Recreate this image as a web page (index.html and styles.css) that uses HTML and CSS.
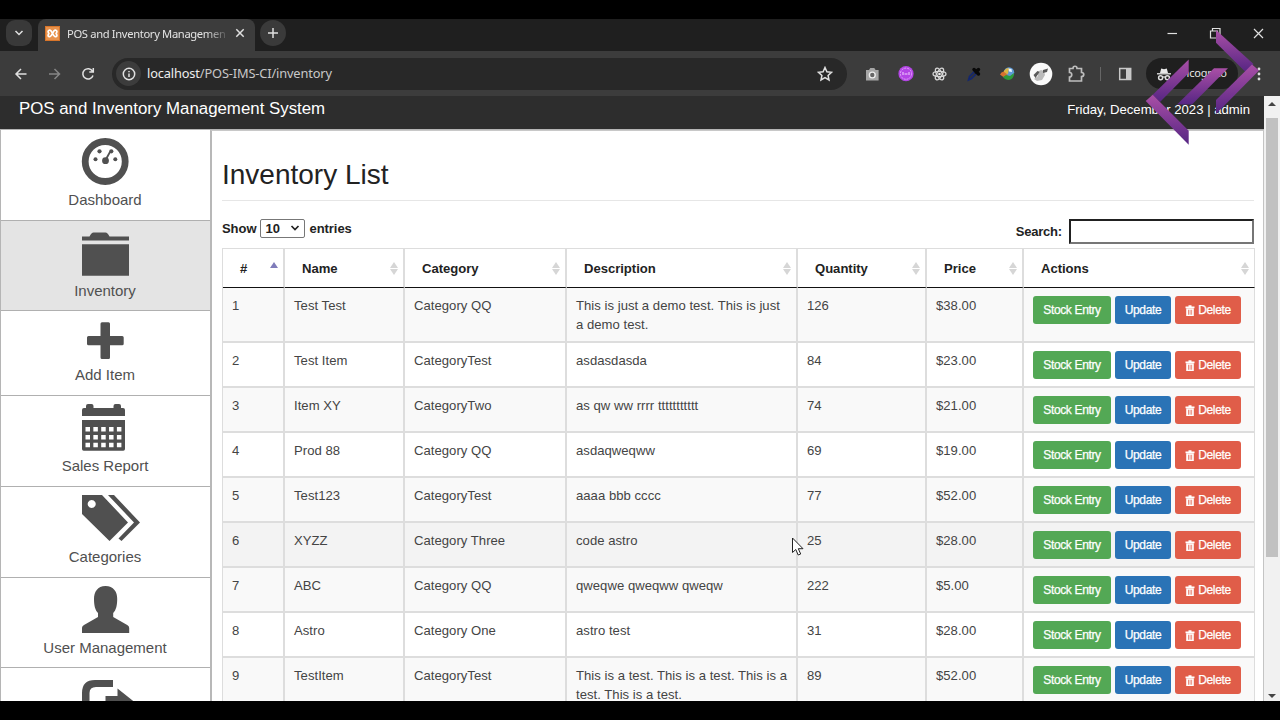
FILE: index.html
```html
<!DOCTYPE html>
<html lang="en">
<head>
<meta charset="utf-8">
<title>POS and Inventory Management System</title>
<link rel="stylesheet" href="styles.css">
</head>
<body>
<div class="tabstrip">
  <span class="tab-search"><svg width="10" height="10" viewBox="0 0 10 10"><path d="M1.500 3 5 6.500 8.500 3" class="ln" stroke-width="1.700"/></svg></span>
  <div class="tab">
    <svg class="fav" width="15" height="15" viewBox="0 0 15 15"><rect width="15" height="15" fill="#d8752a"/><rect x="1" y="1" width="13" height="13" fill="#e8924c"/><path d="M5 4.200C2.500 4 2.500 7 4.500 7.500 2.500 8 2.500 11 5 10.700 7 10.500 8 4.400 10 4.200 12.500 4 12.500 7 10.500 7.500 12.500 8 12.500 11 10 10.700 8 10.500 7 4.400 5 4.200" fill="none" stroke="#fff" stroke-width="1.700"/></svg>
    <span class="tab-title">POS and Inventory Managemen</span>
    <svg class="tab-x" width="10" height="10" viewBox="0 0 10 10"><path d="M1.300 1.300l7.400 7.400M8.700 1.300l-7.400 7.400" class="ln"/></svg>
  </div>
  <span class="newtab"><svg width="12" height="12" viewBox="0 0 12 12"><path d="M6 1v10M1 6h10" class="ln"/></svg></span>
  <svg class="winctl" width="110" height="32" viewBox="0 0 110 32"><path d="M7.500 14.500h9.500" class="ln thin"/><path d="M50.500 12h7v7h-7zM52.500 12V9.500h7.500v7.500h-2.500" class="ln thin"/><path d="M94 10l9 9M103 10l-9 9" class="ln thin"/></svg>
</div>
<div class="toolbar">
  <svg class="nav" width="110" height="44" viewBox="0 0 110 44"><path d="M26.500 22H16M21 17l-5 5 5 5" class="ln"/><path d="M49 22h10.500M54.500 17l5 5-5 5" class="ln" opacity=".45"/><path d="M92.600 19.300A5.200 5.200 0 1 0 93 23.500M93.300 16v4h-4" class="ln"/></svg>
  <div class="omnibox">
    <span class="info"><svg width="14" height="14" viewBox="0 0 14 14"><circle cx="7" cy="7" r="5.700" class="ln"/><path d="M7 6.500V10M7 4v1.300" class="ln"/></svg></span>
    <span class="url"><b>localhost</b>/POS-IMS-CI/inventory</span>
    <svg class="star" width="16" height="16" viewBox="0 0 16 16"><path d="M8 1.500l1.900 4.300 4.600.5-3.400 3.100.9 4.600L8 11.700 4 14l.9-4.600L1.500 6.300l4.600-.5z" class="ln"/></svg>
  </div>
  <svg class="exts" width="280" height="44" viewBox="860 51 280 44">
    <path d="M866 69h3l1.300-2h4l1.300 2h3v10.500h-12.600z" fill="#a6a6a6"/><circle cx="872.300" cy="74" r="2.900" fill="#666" stroke="#eee" stroke-width="1.400"/>
    <circle cx="906" cy="72.700" r="7.600" fill="#b445e6"/><circle cx="906" cy="72.700" r="5.600" fill="none" stroke="#e3a8fa" stroke-dasharray="2 1"/><path d="M903 71v3M909 71v3M904.500 73h3" stroke="#f2d4ff"/>
    <g fill="none" stroke="#d7d7d7" stroke-width="1.300"><ellipse cx="939.500" cy="73" rx="6.500" ry="2.600"/><ellipse cx="939.500" cy="73" rx="6.500" ry="2.600" transform="rotate(60 939.500 73)"/><ellipse cx="939.500" cy="73" rx="6.500" ry="2.600" transform="rotate(120 939.500 73)"/></g><circle cx="939.500" cy="73" r="1.300" fill="#eee"/>
    <path d="M968.500 79l1-3.500 6-6 2 2-6 6z" fill="#333" stroke="#14276e" stroke-width="1.600"/><path d="M974 68.500l4.500 4.500M976 71l2.500-2.500" stroke="#080808" stroke-width="3.400" stroke-linecap="round"/>
    <circle cx="1009" cy="71.500" r="5.200" fill="#5d9ad7"/><path d="M1003 72q2-5 6-5l-1 6z" fill="#e0b640"/><path d="M1000 73.500q2-4 5-2l3 3-4 2z" fill="#d8722f"/><path d="M1003 76l3-2 4 1 4-3q0 6-5 7-4 0-6-3z" fill="#2e9a3b"/><path d="M1008.500 67.500l3 .5.500 3-3-.5z" fill="#e8f2fc"/>
    <circle cx="1041" cy="73" r="11.300" fill="#fafafa"/><path d="M1037 71l4-2 3 1 1 4-3 5-5 1-3-2 4-3z" fill="#bbb"/><path d="M1033.500 74l4-4 2 1-4 6zM1043 69l5-1.500-1 3.500-4 1z" fill="#5a5a5a"/>
    <path d="M1069.500 67.500h3.500c0-3 4-3 4 0h4.500v4c3 0 3 4 0 4v4.500h-12v-4c3 0 3-4.500 0-4.500z" fill="none" stroke="#bdbdbd" stroke-width="1.700"/>
    <path d="M1100.500 66v14" stroke="#666"/>
    <rect x="1119.700" y="67.500" width="11" height="11" fill="none" stroke="#c8c8c8" stroke-width="1.500"/><path d="M1126 67h5v12h-5z" fill="#c8c8c8"/>
  </svg>
  <div class="incog"><svg width="14" height="14" viewBox="0 0 14 14"><path d="M3 6l1.200-4.500L7 2.300l2.800-.8L11 6z" fill="#e8e8e8"/><path d="M0 6.800h14" stroke="#e8e8e8" stroke-width="1.300"/><circle cx="3.600" cy="10.700" r="2" class="ln"/><circle cx="10.400" cy="10.700" r="2" class="ln"/><path d="M5.500 10.200q1.500-.7 3 0" class="ln thin"/></svg><span>Incognito</span></div>
  <svg class="dots" width="6" height="16" viewBox="0 0 6 16"><g fill="#ddd"><circle cx="3" cy="3" r="1.400"/><circle cx="3" cy="8" r="1.400"/><circle cx="3" cy="13" r="1.400"/></g></svg>
</div>
<div class="viewport">
  <div class="page">
    <header class="topbar"><span class="brand">POS and Inventory Management System</span><span class="date">Friday, December 2023 | admin</span></header>
    <div class="cols">
      <nav class="side">
        <a class="item h91"><svg class="ic" viewBox="70 137 70 52"><circle cx="105.200" cy="161.500" r="20" fill="#fff" stroke="#505050" stroke-width="6.800"/><circle cx="105.500" cy="160.700" r="3.400"/><path d="M105 161l5-9" stroke="#505050" stroke-width="1.800"/><circle cx="99.500" cy="151.300" r="2.100"/><circle cx="111.300" cy="151.300" r="2.100"/><circle cx="95.500" cy="159.300" r="2"/><circle cx="115.300" cy="159.300" r="2"/></svg><span>Dashboard</span></a>
        <a class="item h90 on"><svg class="ic" viewBox="70 228 70 52"><path d="M82 240.500v-4h7.500q2-4 4-4h12q2 0 4 4H129v4zM82 244.300h47v31.400H82z"/></svg><span>Inventory</span></a>
        <a class="item h85"><svg class="ic" viewBox="70 312 70 52"><path d="M102 322.300h6.500q1.500 0 1.500 1.500V336h12.200q1.500 0 1.500 1.500v6.300q0 1.500-1.500 1.500H110v12.200q0 1.500-1.500 1.500H102q-1.500 0-1.500-1.500V345.300H88.500q-1.500 0-1.500-1.500v-6.300q0-1.500 1.500-1.500h12v-12.200q0-1.500 1.500-1.500z"/></svg><span>Add Item</span></a>
        <a class="item h91"><svg class="ic" viewBox="70 403 70 52"><path d="M82 416v-6q0-2 2-2h2v-2q0-2 2-2h3.500q2 0 2 2v2H113.500v-2q0-2 2-2h3.500q2 0 2 2v2h2q2 0 2 2v6zM82 420h43v29q0 1.700-1.700 1.700H83.700Q82 450.700 82 449z"/><path d="M85.500 429.300h37M85.500 437.200h37M85.500 445h37" stroke="#fff" stroke-width="4.500" stroke-dasharray="4.500 3.350"/></svg><span>Sales Report</span></a>
        <a class="item h91"><svg class="ic" viewBox="70 494 70 52"><path fill-rule="evenodd" d="M82 495h20l26 27.500L109.500 541 82 514zM91.700 500a4 4 0 1 0 .01 0z"/><path d="M108 495h6l26 27.500L121.500 541l-3-2.500 15.500-16z"/></svg><span>Categories</span></a>
        <a class="item h90"><svg class="ic" viewBox="70 585 70 52"><path d="M105.500 586c8 0 12 6 11.700 13 0 6-1 11-4 14v4l14 8q2 1.200 2 3v5H82v-5q0-1.800 2-3l14-8v-4c-3-3-4-8-4-14 0-7 3.500-13 11.500-13z"/></svg><span>User Management</span></a>
        <a class="item last"><svg class="ic" viewBox="70 668 70 52"><path d="M113 680v7H96q-6.500 0-6.500 6v27H82v-27q0-13 13-13zM117.500 688.500L137 704l-19.500 16v-8H105.500v-16h12z"/></svg></a>
      </nav>
      <main class="main">
        <h1>Inventory List</h1>
        <div class="controls">
          <div class="len">Show <span class="select">10<svg width="10" height="8" viewBox="0 0 10 8"><path d="M1.500 2L5 5.500 8.500 2" fill="none" stroke="#222" stroke-width="1.700"/></svg></span> entries</div>
          <div class="search"><span>Search:</span><input type="text"></div>
        </div>
        <table>
          <colgroup><col class="c1"><col class="c2"><col class="c3"><col class="c4"><col class="c5"><col class="c6"><col class="c7"></colgroup>
          <thead><tr><th class="asc">#</th><th>Name</th><th>Category</th><th>Description</th><th>Quantity</th><th>Price</th><th>Actions</th></tr></thead>
          <tbody id="rows"></tbody>
        </table>
      </main>
    </div>
  </div>
  <div class="scroll"><i class="up"></i><div class="thumb"></div><i class="down"></i></div>
</div>
<svg class="logo" width="120" height="120" viewBox="1145 28 120 120">
  <defs><linearGradient id="ga" x1="0" y1="0" x2="0" y2="1"><stop offset="0" stop-color="#a94fa6"/><stop offset="1" stop-color="#562583"/></linearGradient></defs>
  <g fill="url(#ga)"><path d="M1152.500 95L1188.700 59.500v13.500L1160 102z"/><path d="M1145.700 101L1152.700 94.800 1188.700 130.700v14z"/><path d="M1214 68.300h14L1192 104.500h-15z"/><path d="M1216 30l37.500 34-8 8L1216 42.700z"/><path d="M1252 64.500l7 6L1216 114v-14z"/></g>
</svg>
<svg class="cursor" width="14" height="20" viewBox="0 0 14 20"><path d="M1.500 1v14.500l3.300-3 2.400 5.500 2.500-1-2.400-5.300h4.700z" fill="#fff" stroke="#222"/></svg>
<script src="app.js"></script>
</body>
</html>
```

FILE: app.js
```js
const items = [
  ["Test Test", "Category QQ", "This is just a demo test. This is just a demo test.", "126", "$38.00"],
  ["Test Item", "CategoryTest", "asdasdasda", "84", "$23.00"],
  ["Item XY", "CategoryTwo", "as qw ww rrrr ttttttttttt", "74", "$21.00"],
  ["Prod 88", "Category QQ", "asdaqweqww", "69", "$19.00"],
  ["Test123", "CategoryTest", "aaaa bbb cccc", "77", "$52.00"],
  ["XYZZ", "Category Three", "code astro", "25", "$28.00"],
  ["ABC", "Category QQ", "qweqwe qweqww qweqw", "222", "$5.00"],
  ["Astro", "Category One", "astro test", "31", "$28.00"],
  ["TestItem", "CategoryTest", "This is a test. This is a test. This is a test. This is a test.", "89", "$52.00"]
];
const trash = '<svg width="10" height="11" viewBox="0 0 10 11"><path fill="#fff" fill-rule="evenodd" d="M.5 1.500h3V.3h3v1.200h3v1.700h-9zM1.200 3.500h7.600V11H1.200zM3 4.700v5h.7v-5zM4.700 4.700v5h.7v-5zM6.400 4.700v5h.7v-5z"/></svg>';
const actions = '<div class="acts"><button class="btn green">Stock Entry</button><button class="btn blue">Update</button><button class="btn red">' + trash + 'Delete</button></div>';
document.getElementById("rows").innerHTML = items.map((r, i) =>
  `<tr class="${i === 5 ? "hover" : ""}${i === 0 ? "first" : ""}"><td>${i + 1}</td>${r.map(c => `<td>${c}</td>`).join("")}<td>${actions}</td></tr>`
).join("");
```

FILE: styles.css
```css
* { box-sizing: border-box; }
body { margin: 0; width: 1280px; height: 720px; overflow: hidden; background: #000; padding-top: 19px; font-family: "Liberation Sans", Arial, sans-serif; position: relative; }
svg { display: block; flex: none; }
.ln { fill: none; stroke: #e0e0e0; stroke-width: 1.500; }
.thin { stroke-width: 1.200; }
.tabstrip { height: 32px; background: #1f1f1f; display: flex; align-items: flex-start; font-family: "Noto Sans", sans-serif; }
.tab-search { width: 26px; height: 26px; margin: 1px 6px 0; border-radius: 9px; background: #393939; display: flex; align-items: center; justify-content: center; }
.tab { width: 217px; height: 32px; background: #3c3c3c; border-radius: 8px 8px 0 0; display: flex; align-items: center; padding: 0 10px 4px 7px; }
.tab-title { font-size: 11.200px; color: #e3e3e3; margin-left: 7px; width: 158px; overflow: hidden; white-space: nowrap; letter-spacing: -.34px; mask-image: linear-gradient(90deg, #000 88%, rgba(0,0,0,.2)); }
.tab-x { margin-left: 10px; }
.newtab { width: 26px; height: 26px; margin: 1px 0 0 5px; border-radius: 50%; background: #3a3a3a; display: flex; align-items: center; justify-content: center; }
.winctl { margin-left: auto; margin-right: 10px; }
.toolbar { height: 45px; background: #3c3c3c; display: flex; align-items: center; font-family: "Noto Sans", sans-serif; }
.nav { margin-right: 2px; }
.omnibox { width: 735px; height: 32px; border-radius: 16px; background: #282828; display: flex; align-items: center; padding: 0 14px 0 4px; margin-right: 13px; }
.info { width: 25px; height: 25px; border-radius: 50%; background: #3c3c3c; display: flex; align-items: center; justify-content: center; margin-right: 6px; }
.url { font-size: 12.800px; color: #c8c8c8; letter-spacing: -.14px; padding-bottom: 2px; }
.url b { font-weight: 400; color: #eee; }
.star { margin-left: auto; }
.incog { width: 92px; height: 31px; margin-left: 6px; border-radius: 16px; background: #1f1f1f; display: flex; align-items: center; padding-left: 11px; font-size: 11px; color: #e8e8e8; }
.incog span { margin-left: 8px; letter-spacing: -.2px; padding-bottom: 2px; }
.dots { margin-left: 18px; }
.viewport { height: 605px; display: flex; overflow: hidden; background: #fff; }
.page { width: 1264px; overflow: hidden; }
.topbar { height: 33px; background: #2d2d2d; color: #fff; display: flex; justify-content: space-between; padding: 0 14px 0 19px; }
.brand { font-size: 16.850px; line-height: 25px; }
.date { font-size: 13.150px; line-height: 27px; }
.cols { display: flex; border-top: 1px solid #b5b5b5; }
.side { width: 210px; border-left: 1px solid #b5b5b5; }
.item { display: flex; flex-direction: column; align-items: center; justify-content: flex-end; padding: 0 1px 9px 0; border-bottom: 1px solid #b0b0b0; color: #505050; font-size: 15px; line-height: 22px; }
.ic { width: 70px; height: 52px; fill: #505050; }
.on { background: #e4e4e4; }
.h91 { height: 91px; } .h90 { height: 90px; padding-bottom: 8px; } .h85 { height: 85px; }
.last { height: 52px; padding: 0 1px 0 0; border: 0; }
.main { width: 1054px; height: 600px; border-left: 2px solid #b8b8b8; border-right: 1px solid #c4c4c4; border-top: 1px solid #c8c8c8; padding: 24px 0 0 10px; }
h1 { margin: 0; width: 1032px; height: 46px; border-bottom: 1px solid #e6e6e6; font-size: 28px; font-weight: 400; color: #222; line-height: 40px; }
.controls { height: 47px; width: 1032px; display: flex; justify-content: space-between; font-size: 13px; font-weight: 700; color: #222; }
.len { display: flex; align-items: center; height: 20px; margin-top: 17px; gap: 4px; letter-spacing: -.05px; }
.select { width: 45px; height: 19px; border: 1px solid #777; border-radius: 2px; display: flex; align-items: center; justify-content: space-between; padding: 0 4px; }
.search { display: flex; align-items: center; gap: 7px; height: 25px; margin-top: 18px; letter-spacing: -.2px; }
.search input { width: 185px; height: 25px; border: 2px inset #767676; border-radius: 0; background: #fff; outline: 0; }
table { width: 1033px; table-layout: fixed; border-collapse: separate; border-spacing: 0; border-top: 1px solid #ddd; border-left: 1px solid #ddd; font-size: 13.100px; color: #444; }
.c1 { width: 62px; } .c2 { width: 120px; } .c3 { width: 162px; } .c4 { width: 231px; } .c5 { width: 129px; } .c6 { width: 97px; } .c7 { width: 231px; }
th { height: 39px; padding: 0 17px; text-align: left; color: #222; border-right: 2px solid #ddd; border-bottom: 1px solid #111; position: relative; letter-spacing: -.03px; }
th::before, th::after { content: ""; position: absolute; right: 5px; border: 4px solid transparent; }
th::before { top: 9px; border-bottom: 6px solid #d6d6d6; }
th::after { top: 20px; border-top: 6px solid #d6d6d6; }
.asc::before { border-bottom-color: #7f7cba; }
.asc::after { display: none; }
td { height: 45px; padding: 9px 4px 0 9px; line-height: 18.500px; vertical-align: top; border-right: 2px solid #ddd; border-bottom: 2px solid #ddd; letter-spacing: .03px; }
td:last-child { padding: 8px 9px 0; }
th:last-child, td:last-child { border-right-width: 1px; }
.first td { height: 55px; }
.first td:nth-child(4) { padding-right: 14px; }
tbody tr:nth-child(odd) { background: #f9f9f9; }
tbody tr.hover { background: #f3f3f3; }
.acts { display: flex; gap: 4px; }
.btn { height: 28px; border: 0; border-radius: 3px; color: #fff; font: 12px "Liberation Sans", Arial, sans-serif; letter-spacing: -.36px; padding: 0; white-space: nowrap; display: flex; align-items: center; justify-content: center; gap: 3px; -webkit-text-stroke: .25px #fff; }
.green { width: 78px; background: #53a855; } .blue { width: 56px; background: #2a73b6; } .red { width: 66px; background: #e05d49; }
.scroll { width: 16px; background: #f1f1f1; display: flex; flex-direction: column; align-items: center; }
.up, .down { border: 4px solid transparent; }
.up { border-bottom-color: #444; margin: 2px 0 12px; }
.thumb { width: 12px; height: 439px; background: #c1c1c1; }
.down { border-top-color: #444; margin-top: auto; margin-bottom: -1px; }
.logo { position: absolute; left: 1145px; top: 28px; }
.cursor { position: absolute; left: 791px; top: 537px; }
```
